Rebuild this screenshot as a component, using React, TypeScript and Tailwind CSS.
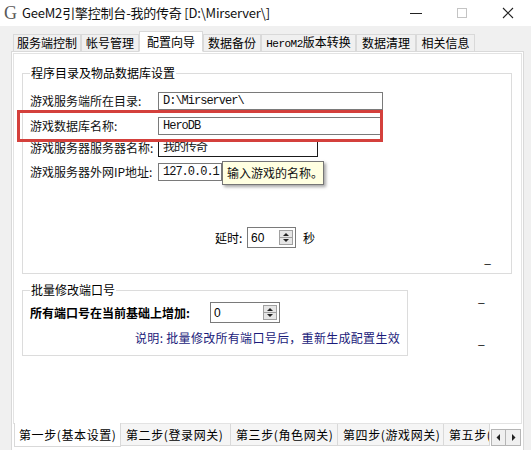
import React from 'react'

const cjk = '"Noto Sans CJK SC", "Noto Sans", sans-serif'
const mono = '"Liberation Mono", "Noto Sans CJK SC", monospace'

const topTabs = [
  { label: '服务端控制', w: 'w-[68px]' },
  { label: '帐号管理', w: 'w-[58px]' },
  { label: '配置向导', w: 'w-[64px]', active: true },
  { label: '数据备份', w: 'w-[58px]' },
  { label: 'HeroM2版本转换', w: 'w-[95px]' },
  { label: '数据清理', w: 'w-[60px]' },
  { label: '相关信息', w: 'w-[59px]' },
]

const stepTabs = [
  { label: '第一步(基本设置)', w: 'w-[107px]', active: true },
  { label: '第二步(登录网关)', w: 'w-[110px]' },
  { label: '第三步(角色网关)', w: 'w-[107px]' },
  { label: '第四步(游戏网关)', w: 'w-[106px]' },
  { label: '第五步(', w: 'w-[46px]' },
]

function SpinArrows() {
  return (
    <svg width="14" height="15" viewBox="0 0 14 15" className="shrink-0">
      <rect x="0.5" y="0.5" width="13" height="14" fill="#e6e6e6" stroke="#a0a0a0" />
      <line x1="1" y1="7.5" x2="13" y2="7.5" stroke="#a0a0a0" />
      <path d="M4 6 L7 3 L10 6 Z" fill="#222" />
      <path d="M4 9 L7 12 L10 9 Z" fill="#222" />
    </svg>
  )
}

function Field({ label, value, w, dark }: { label: string; value: string; w: string; dark?: boolean }) {
  return (
    <div className="flex items-center h-[18px]">
      <span className="w-[128px] text-[12px] leading-[14px] text-[#111]">{label}</span>
      <div
        className={`${w} h-[18px] border ${dark ? 'border-[#1a1a1a]' : 'border-[#7a7a7a]'} bg-white flex items-center pl-[4px] overflow-hidden whitespace-nowrap`}
      >
        <span className="text-[12px] leading-[16px] tracking-[-1px] text-[#111]" style={{ fontFamily: mono }}>
          {value}
        </span>
      </div>
    </div>
  )
}

export default function App() {
  return (
    <div
      className="relative w-[531px] h-[450px] overflow-hidden bg-[#f0f0f0] text-black"
      style={{ fontFamily: cjk }}
    >
      {/* title bar */}
      <div className="h-[26px] bg-white flex items-center">
        <span
          className="w-[22px] pl-[4px] text-[18px] leading-none text-[#5a5a5a]"
          style={{ fontFamily: '"Liberation Serif", serif' }}
        >
          G
        </span>
        <span className="text-[13px] leading-[18px] tracking-[-0.2px] text-[#111]">
          GeeM2引擎控制台-我的传奇 [D:\Mirserver\]
        </span>
        <div className="ml-auto flex items-center h-full">
          <div className="w-[46px] h-full flex items-center justify-center">
            <div className="w-[12px] h-px bg-[#222]" />
          </div>
          <div className="w-[46px] h-full flex items-center justify-center">
            <div className="w-[10px] h-[10px] border border-[#c4c4c4]" />
          </div>
          <div className="w-[46px] h-full flex items-center justify-center">
            <svg width="12" height="12" viewBox="0 0 12 12">
              <path d="M1 1 L11 11 M11 1 L1 11" stroke="#222" strokeWidth="1.1" />
            </svg>
          </div>
        </div>
      </div>

      {/* main tab strip */}
      <div className="h-[25px] flex items-end pl-[13px]">
        {topTabs.map((t) => (
          <div
            key={t.label}
            className={`${t.w} flex items-center justify-center text-[12px] leading-[14px] whitespace-nowrap border border-[#d9d9d9] ${
              t.active
                ? 'h-[21px] bg-white border-b-white -mb-px relative z-10'
                : 'h-[17px] bg-[#f0f0f0] border-b-0'
            }`}
          >
            {t.label === 'HeroM2版本转换' ? (
              <span>
                <span className="text-[11px] tracking-[-0.5px]" style={{ fontFamily: mono }}>
                  HeroM2
                </span>
                版本转换
              </span>
            ) : (
              t.label
            )}
          </div>
        ))}
      </div>

      {/* page */}
      <div className="ml-[11px] w-[513px] h-[399px] border border-[#d9d9d9] border-b-0 bg-white pt-[1px] px-[1px]">
        <div className="flex flex-col h-[396px]">
          <div className="h-[371px] border border-[#e3e3e3] pl-[8px]">
            <fieldset className="mt-[11px] w-[490px] h-[209px] border border-[#dcdcdc] px-[7px]">
              <legend className="px-[1px] text-[12px] leading-[16px]">程序目录及物品数据库设置</legend>
              <div className="mt-[11px] flex flex-col">
                <Field label="游戏服务端所在目录:" value={'D:\\Mirserver\\'} w="w-[225px]" />
                <div className="mt-[7px]">
                  <Field label="游戏数据库名称:" value="HeroDB" w="w-[225px]" />
                </div>
                <div className="mt-[4px]">
                  <Field label="游戏服务器服务器名称:" value="我的传奇" w="w-[160px]" dark />
                </div>
                <div className="mt-[6px]">
                  <Field label="游戏服务器外网IP地址:" value="127.0.0.1" w="w-[64px]" />
                </div>
                <div className="mt-[46px] ml-[185px] flex items-center h-[21px]">
                  <span className="text-[12px] leading-[14px] w-[32px]">延时:</span>
                  <div className="w-[49px] h-[21px] border border-[#7a7a7a] flex items-center justify-between pl-[3px] pr-[2px]">
                    <span className="text-[12px] leading-[14px]" style={{ fontFamily: '"Liberation Sans", sans-serif' }}>
                      60
                    </span>
                    <SpinArrows />
                  </div>
                  <span className="ml-[7px] text-[12px] leading-[14px]">秒</span>
                </div>
                <div className="mt-[3px] flex justify-end pr-[13px] text-[12px] leading-[14px]">_</div>
              </div>
            </fieldset>

            <div className="flex mt-[8px]">
              <fieldset className="w-[386px] h-[74px] border border-[#dcdcdc] px-[7px]">
                <legend className="px-[1px] text-[12px] leading-[16px]">批量修改端口号</legend>
                <div className="mt-[4px] flex items-center h-[21px]">
                  <span className="w-[180px] text-[12px] leading-[14px] font-bold">所有端口号在当前基础上增加:</span>
                  <div className="w-[70px] h-[21px] border border-[#7a7a7a] flex items-center justify-between pl-[3px] pr-[2px]">
                    <span className="text-[12px] leading-[14px]" style={{ fontFamily: '"Liberation Sans", sans-serif' }}>
                      0
                    </span>
                    <SpinArrows />
                  </div>
                </div>
                <div className="mt-[8px] flex justify-end text-[12px] leading-[14px] tracking-[0.3px] text-[#1b1b7a]">
                  说明: 批量修改所有端口号后，重新生成配置生效
                </div>
              </fieldset>
              <div className="ml-[70px] flex flex-col text-[12px] leading-[14px]">
                <span className="mt-[8px]">_</span>
                <span className="mt-[28px]">_</span>
              </div>
            </div>
          </div>

          {/* step tabs along the bottom */}
          <div className="h-[24px] flex items-start pl-[1px] relative">
            {stepTabs.map((t) => (
              <div
                key={t.label}
                className={`${t.w} overflow-hidden whitespace-nowrap text-[12px] leading-[14px] tracking-[0.6px] flex items-center ${
                  t.active
                    ? 'h-[24px] -mt-px bg-white border border-t-0 border-[#d9d9d9] pl-[4px] relative z-10'
                    : 'h-[22px] bg-[#f5f5f5] border-r border-b border-[#d9d9d9] pl-[5px]'
                }`}
              >
                {t.label}
              </div>
            ))}
            <div className="ml-auto mt-[5px] mr-[1px] flex">
              <div className="w-[15px] h-[17px] border border-[#b5b5b5] bg-[#f0f0f0] flex items-center justify-center">
                <svg width="5" height="7" viewBox="0 0 5 7">
                  <path d="M4 0 L0.5 3.5 L4 7 Z" fill="#222" />
                </svg>
              </div>
              <div className="w-[15px] h-[17px] border border-l-0 border-[#b5b5b5] bg-[#f0f0f0] flex items-center justify-center">
                <svg width="5" height="7" viewBox="0 0 5 7">
                  <path d="M1 0 L4.5 3.5 L1 7 Z" fill="#222" />
                </svg>
              </div>
            </div>
          </div>
        </div>
      </div>

      {/* red highlight around the database name row */}
      <div className="absolute left-[17px] top-[110px] w-[366px] h-[32px] border-[3px] border-[#d4403c]" />

      {/* hint popup beside the IP field */}
      <div className="absolute left-[222px] top-[161px] w-[102px] h-[24px] bg-[#ffffe1] border border-[#767676] shadow-[2px_2px_3px_rgba(0,0,0,0.35)] flex items-center pl-[4px] text-[12px] leading-[14px] text-[#111]">
        输入游戏的名称。
      </div>
    </div>
  )
}
